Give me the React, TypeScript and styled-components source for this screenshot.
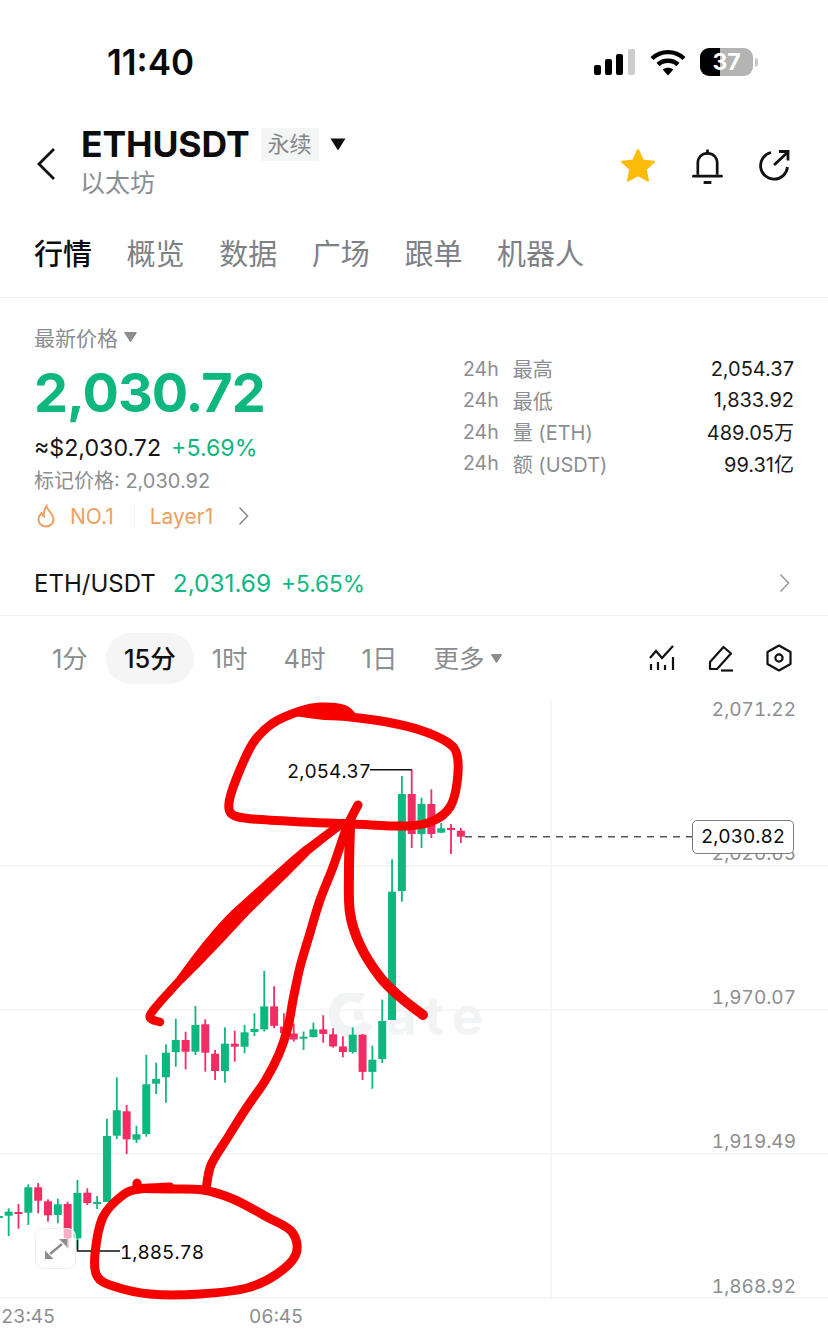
import React from "react";
import styled, { createGlobalStyle } from "styled-components";

const GREEN = "#0fb780";
const RED = "#f32c63";
const GRAY = "#8b8e91";
const ORANGE = "#ee9f5f";
const FONT = `Inter, "Noto Sans CJK SC", sans-serif`;

const Global = createGlobalStyle`
  *, *::before, *::after { box-sizing: border-box; }
  html, body { margin: 0; padding: 0; background: #fff; }
  body { font-family: ${FONT}; color: #111; }
`;

const Page = styled.div`
  width: 828px;
  height: 1333px;
  overflow: hidden;
  background: #fff;
`;

const StatusBar = styled.div`
  height: 124px;
  display: flex;
  align-items: center;
  justify-content: space-between;
  padding: 0 70px 0 107px;
`;
const Clock = styled.div`
  font-size: 35px;
  font-weight: 600;
  color: #0a0a0a;
`;
const StatusIcons = styled.div`
  display: flex;
  align-items: center;
  gap: 14px;
`;
const Battery = styled.div`
  position: relative;
  width: 53px;
  height: 28px;
  border-radius: 9px;
  overflow: hidden;
  background: linear-gradient(90deg, #000 0 38%, #b4b4b4 38% 100%);
  color: #fff;
  font-size: 23px;
  font-weight: 700;
  line-height: 28px;
  text-align: center;
`;
const BatteryNub = styled.div`
  width: 3px;
  height: 9px;
  margin-left: -12px;
  border-radius: 0 3px 3px 0;
  background: #c8c8c8;
`;

const Header = styled.div`
  height: 84px;
  display: flex;
  align-items: flex-start;
  padding: 0 38px 0 36px;
`;
const Back = styled.div`
  width: 45px;
  height: 80px;
  display: flex;
  align-items: center;
`;
const TitleCol = styled.div`
  flex: 1;
`;
const TitleRow = styled.div`
  height: 40px;
  display: flex;
  align-items: center;
`;
const Symbol = styled.div`
  font-size: 35.5px;
  font-weight: 700;
  color: #0c0c0c;
  letter-spacing: -0.1px;
`;
const Badge = styled.div`
  margin-left: 11px;
  width: 58px;
  height: 33px;
  background: #f4f6f6;
  color: #85888a;
  font-size: 22px;
  line-height: 33px;
  text-align: center;
`;
const Caret = styled.svg`
  margin-left: 11px;
`;
const Sub = styled.div`
  height: 38px;
  margin-left: -1px;
  line-height: 38px;
  font-size: 25px;
  color: ${GRAY};
`;
const HeaderIcons = styled.div`
  height: 84px;
  display: flex;
  align-items: center;
  gap: 35px;
`;

const Tabs = styled.div`
  height: 90px;
  display: flex;
  align-items: center;
  gap: 34.6px;
  padding: 0 0 2px 34px;
  border-bottom: 1px solid #f1f1f1;
`;
const Tab = styled.div<{ $active?: boolean }>`
  font-size: 29px;
  font-weight: ${(p) => (p.$active ? 500 : 400)};
  color: ${(p) => (p.$active ? "#0d0d0d" : "#7d8185")};
`;

const Quote = styled.div`
  height: 253px;
  display: flex;
  justify-content: space-between;
  padding: 24px 34px 0;
`;
const QuoteLeft = styled.div`
  display: flex;
  flex-direction: column;
`;
const PriceLabel = styled.div`
  height: 29px;
  display: flex;
  align-items: center;
  gap: 6px;
  font-size: 21px;
  color: ${GRAY};
`;
const BigPrice = styled.div`
  margin-top: 10px;
  height: 64px;
  line-height: 64px;
  font-size: 54px;
  font-weight: 700;
  color: ${GREEN};
  letter-spacing: -1px;
`;
const FiatRow = styled.div`
  margin-top: 7px;
  height: 32px;
  display: flex;
  align-items: center;
  gap: 10px;
  font-size: 23.2px;
  color: #161616;
`;
const Up = styled.span`
  color: ${GREEN};
`;
const MarkPrice = styled.div`
  margin-top: 2px;
  height: 30px;
  line-height: 30px;
  font-size: 20px;
  color: ${GRAY};
`;
const TagRow = styled.div`
  margin-top: 4px;
  height: 32px;
  display: flex;
  align-items: center;
  font-size: 21px;
  color: ${ORANGE};
`;
const FlameIcon = styled.svg`
  margin: 0 14px 0 2px;
`;
const TagSep = styled.div`
  width: 1px;
  height: 26px;
  margin: 0 15px 0 20px;
  background: #f3f3f3;
`;
const TagArrow = styled.span`
  margin-left: 25px;
  display: flex;
`;
const Stats = styled.div`
  width: 331px;
  padding-top: 31px;
`;
const StatRow = styled.div`
  height: 31.5px;
  display: flex;
  align-items: center;
  font-size: 19.5px;
  color: ${GRAY};
`;
const StatName = styled.span`
  margin-left: 14px;
  flex: 1;
  font-size: 20px;
`;
const StatValue = styled.span`
  color: #1a1a1a;
  font-size: 20px;
`;

const PairRow = styled.div`
  height: 65px;
  display: flex;
  align-items: center;
  padding: 0 38px 0 34px;
  border-bottom: 1px solid #f1f1f1;
  font-size: 24px;
`;
const PairName = styled.span`
  color: #141414;
  margin-right: 17px;
`;
const PairPrice = styled.span`
  color: ${GREEN};
  font-size: 24.4px;
  margin-right: 10px;
`;
const PairChange = styled.span`
  color: ${GREEN};
  flex: 1;
  font-size: 22.6px;
`;

const IntervalRow = styled.div`
  height: 84px;
  display: flex;
  align-items: center;
  justify-content: space-between;
  padding: 0 36px 0 34px;
`;
const Intervals = styled.div`
  display: flex;
  align-items: center;
`;
const Interval = styled.div<{ $active?: boolean }>`
  height: 51px;
  line-height: 51px;
  padding: 0 18px;
  border-radius: 25px;
  font-size: 25.5px;
  font-weight: ${(p) => (p.$active ? 500 : 400)};
  color: ${(p) => (p.$active ? "#111" : GRAY)};
  background: ${(p) => (p.$active ? "#f5f5f5" : "transparent")};
`;
const More = styled(Interval)`
  display: flex;
  align-items: center;
  gap: 7px;
`;
const ToolIcons = styled.div`
  display: flex;
  align-items: center;
  gap: 32px;
`;

const Chart = styled.div`
  position: relative;
  height: 633px;
  overflow: hidden;
`;
const Layer = styled.svg`
  position: absolute;
  left: 0;
  top: 0;
`;
const Watermark = styled.div`
  position: absolute;
  left: 328px;
  top: 290px;
  display: flex;
  align-items: center;
  gap: 6px;
  font-size: 53px;
  line-height: 52px;
  font-weight: 700;
  letter-spacing: 8px;
  color: #f2f3f5;
`;
const AxisPrice = styled.div<{ $y: number }>`
  position: absolute;
  right: 32px;
  top: ${(p) => p.$y - 700 - 13}px;
  line-height: 28px;
  font-size: 19px;
  font-variant-numeric: tabular-nums;
  color: ${GRAY};
`;
const AxisTime = styled.div<{ $x: number }>`
  position: absolute;
  left: ${(p) => p.$x}px;
  top: 603px;
  line-height: 28px;
  font-size: 19px;
  font-variant-numeric: tabular-nums;
  color: ${GRAY};
`;
const PeakLabel = styled.div<{ $x: number; $y: number }>`
  position: absolute;
  left: ${(p) => p.$x}px;
  top: ${(p) => p.$y - 700 - 13}px;
  line-height: 28px;
  font-size: 19px;
  font-variant-numeric: tabular-nums;
  color: #0b0b0b;
`;
const LastPrice = styled.div`
  position: absolute;
  left: 692px;
  top: 120px;
  width: 102px;
  height: 34px;
  border: 1px solid #7d7d7d;
  border-radius: 5px;
  background: #fff;
  font-size: 19px;
  font-variant-numeric: tabular-nums;
  line-height: 32px;
  text-align: center;
  color: #0b0b0b;
`;
const ExpandButton = styled.div`
  position: absolute;
  left: 35px;
  top: 528px;
  width: 41px;
  height: 41px;
  border: 1px solid #efefef;
  border-radius: 8px;
  background: rgba(255, 255, 255, 0.62);
  display: flex;
  align-items: center;
  justify-content: center;
`;

type Candle = [number, number, number, number, "g" | "r"];
type Pt = [number, number];

// wick top, body top, body bottom, wick bottom
const candles: Candle[] = [
  [1215, 1216, 1218, 1220, "g"],
  [1208.3, 1211.7, 1215.7, 1236, "g"],
  [1204, 1212, 1213.7, 1228.7, "r"],
  [1184.3, 1187.3, 1212.7, 1225, "g"],
  [1183, 1187.3, 1200.7, 1213.3, "r"],
  [1199.3, 1201.3, 1215.3, 1221.7, "r"],
  [1198.7, 1204.3, 1215, 1223.3, "g"],
  [1201.7, 1204, 1238.3, 1248.3, "r"],
  [1180, 1193, 1238.3, 1249.3, "g"],
  [1188.3, 1192.7, 1203, 1205, "r"],
  [1196, 1202, 1204, 1209, "g"],
  [1118.7, 1136, 1202, 1202, "g"],
  [1077.3, 1110.3, 1135.7, 1139, "g"],
  [1105, 1111.3, 1139.3, 1154, "r"],
  [1125.7, 1134.3, 1139.7, 1143, "g"],
  [1054.7, 1084.3, 1134, 1136.7, "g"],
  [1062.7, 1079, 1083.7, 1094, "g"],
  [1044.3, 1052.7, 1077.3, 1102.7, "g"],
  [1018.7, 1040, 1052, 1066.7, "g"],
  [1031.7, 1040, 1051.7, 1069.3, "r"],
  [1006, 1025, 1051.7, 1055, "g"],
  [1019.3, 1024.3, 1052.7, 1071.7, "r"],
  [1050, 1053.7, 1071, 1080, "r"],
  [1027.3, 1043.7, 1071, 1082.7, "g"],
  [1030.7, 1043.7, 1046.7, 1061.7, "r"],
  [1025, 1032.3, 1046.7, 1053.3, "g"],
  [1013.3, 1029, 1032, 1036, "g"],
  [970.8, 1006.4, 1029.4, 1031.5, "g"],
  [986.2, 1006.4, 1025.8, 1028.2, "r"],
  [1013.3, 1026.6, 1033, 1035.5, "r"],
  [1023.4, 1033.5, 1039.5, 1041.6, "r"],
  [1031.5, 1036.7, 1038.7, 1050, "g"],
  [1022.6, 1029.4, 1037, 1037.5, "g"],
  [1015.3, 1029.4, 1033.9, 1042.8, "r"],
  [1028.2, 1034.3, 1046.4, 1047.6, "r"],
  [1036.3, 1046.4, 1052, 1057.3, "r"],
  [1027.4, 1034.7, 1052, 1053.7, "g"],
  [1033.9, 1034.7, 1071.9, 1080, "r"],
  [1045.6, 1059.7, 1071.9, 1088.8, "g"],
  [999.6, 1021, 1059, 1063, "g"],
  [859.3, 891.7, 1020, 1020, "g"],
  [776, 794, 891, 901.7, "g"],
  [769.3, 794, 834, 848, "r"],
  [797.7, 804, 834, 848, "g"],
  [789.3, 804, 834, 838, "r"],
  [823, 828.3, 832.7, 833, "g"],
  [824, 828, 829.5, 854, "r"],
  [828, 830.7, 836.7, 843, "r"],
];

const axisPrices: [string, number][] = [
  ["2,071.22", 709],
  ["2,020.65", 853],
  ["1,970.07", 997],
  ["1,919.49", 1141],
  ["1,868.92", 1286],
];

const stats = [
  ["最高", "2,054.37"],
  ["最低", "1,833.92"],
  ["量 (ETH)", "489.05万"],
  ["额 (USDT)", "99.31亿"],
];

// marker strokes, in page coordinates
const topLoop: Pt[] = [
  [352, 716], [343, 709], [320, 707], [300, 711], [273, 723], [253, 743], [237, 777], [229, 803],
  [233, 815], [253, 819], [303, 822], [353, 824], [407, 826], [433, 821], [450, 807], [457, 783],
  [457, 755], [447, 742], [420, 730], [387, 722], [350, 717], [320, 715], [298, 712],
];
const bottomLoop: Pt[] = [
  [137, 1183], [140, 1188], [167, 1189], [203, 1190], [233, 1199], [267, 1217], [292, 1232],
  [296, 1254], [277, 1274], [247, 1288], [200, 1294], [150, 1294], [113, 1286], [97, 1276],
  [95, 1254], [103, 1217], [123, 1195], [140, 1189], [170, 1187],
];
const longArrow: Pt[] = [
  [358, 805], [347, 827], [333, 867], [320, 900], [310, 933], [300, 967], [293, 1000], [288, 1027],
  [279, 1054], [265, 1081], [247, 1107], [228, 1137], [211, 1165], [206, 1190],
];
const leftArrow: Pt[] = [
  [343, 823], [307, 850], [273, 883], [240, 913], [207, 950], [180, 980], [155, 1008], [150, 1018], [160, 1022],
];
const rightArrow: Pt[] = [
  [350, 827], [349, 870], [350, 913], [360, 945], [380, 977], [400, 997], [423, 1015],
];

// Catmull-Rom through the points, written out as cubic segments
const smooth = (pts: Pt[]) => {
  let d = `M${pts[0][0]} ${pts[0][1]}`;
  for (let i = 0; i < pts.length - 1; i++) {
    const a = pts[Math.max(i - 1, 0)];
    const b = pts[i];
    const c = pts[i + 1];
    const e = pts[Math.min(i + 2, pts.length - 1)];
    const c1x = b[0] + (c[0] - a[0]) / 6;
    const c1y = b[1] + (c[1] - a[1]) / 6;
    const c2x = c[0] - (e[0] - b[0]) / 6;
    const c2y = c[1] - (e[1] - b[1]) / 6;
    d += `C${c1x} ${c1y} ${c2x} ${c2y} ${c[0]} ${c[1]}`;
  }
  return d;
};

const Triangle = ({ w, h, color }: { w: number; h: number; color: string }) => (
  <svg width={w} height={h} viewBox="0 0 10 8">
    <path d="M0.5 0.5h9L5 7.5z" fill={color} stroke={color} strokeLinejoin="round" />
  </svg>
);

const Chevron = ({ color }: { color: string }) => (
  <svg width="11" height="20" viewBox="0 0 11 20" fill="none">
    <path d="M1.5 1.5L9.5 10L1.5 18.5" stroke={color} strokeWidth="1.6" />
  </svg>
);

const Candles = () => (
  <>
    {candles.map(([wt, bt, bb, wb, c], i) => {
      const x = -1.16 + i * 9.83;
      const fill = c === "g" ? GREEN : RED;
      return (
        <g key={i} fill={fill}>
          <rect x={x - 0.9} y={wt} width={1.8} height={wb - wt} />
          <rect x={x - 4} y={bt} width={8} height={Math.max(bb - bt, 2)} />
        </g>
      );
    })}
  </>
);

export default function App() {
  return (
    <Page>
      <Global />
      <StatusBar>
        <Clock>11:40</Clock>
        <StatusIcons>
          <svg width="42" height="26" viewBox="0 0 42 26">
            <rect x="0" y="16" width="7" height="10" rx="2" fill="#000" />
            <rect x="11" y="10" width="7" height="16" rx="2" fill="#000" />
            <rect x="22" y="5" width="7" height="21" rx="2" fill="#000" />
            <rect x="34" y="0" width="7" height="26" rx="2" fill="#cdcdcd" />
          </svg>
          <svg width="36" height="27" viewBox="0 0 36 27" fill="none" stroke="#000" strokeWidth="4.4">
            <path d="M2 9.5C11 1 25 1 34 9.5" />
            <path d="M8 15.5C13.5 10.5 22.5 10.5 28 15.5" />
            <path d="M18 26.5L12.6 20.5C15.5 18 20.5 18 23.4 20.5Z" fill="#000" stroke="none" />
          </svg>
          <Battery>37</Battery>
          <BatteryNub />
        </StatusIcons>
      </StatusBar>

      <Header>
        <Back>
          <svg width="20" height="34" viewBox="0 0 20 34" fill="none">
            <path d="M18 2L3 17L18 32" stroke="#111" strokeWidth="2.8" />
          </svg>
        </Back>
        <TitleCol>
          <TitleRow>
            <Symbol>ETHUSDT</Symbol>
            <Badge>永续</Badge>
            <Caret width="16" height="13" viewBox="0 0 16 13">
              <path d="M0.5 0.5h15L8 12.5z" fill="#0c0c0c" />
            </Caret>
          </TitleRow>
          <Sub>以太坊</Sub>
        </TitleCol>
        <HeaderIcons>
          <svg width="38" height="38" viewBox="0 0 38 38">
            <path
              d="M19 3l4.8 10.4 11.2 1.3-8.3 7.6 2.3 11.2L19 28l-10 5.5 2.3-11.2L3 14.7l11.2-1.3z"
              fill="#fdbb0a"
              stroke="#fdbb0a"
              strokeWidth="2"
              strokeLinejoin="round"
            />
          </svg>
          <svg width="31" height="37" viewBox="0 0 32 37" fill="none" stroke="#111" strokeWidth="2.8">
            <path d="M16 1v4" />
            <path d="M6 27V15C6 9 10 5 16 5s10 4 10 10v12" />
            <path d="M1.5 28.5h29" strokeLinecap="round" />
            <path d="M12 35h8" strokeWidth="3" />
          </svg>
          <svg width="32" height="32" viewBox="0 0 32 32" fill="none" stroke="#111" strokeWidth="2.8">
            <path d="M13 2.5A13.5 13.5 0 1 0 29.5 17" />
            <path d="M16 15L29.5 2.5" />
            <path d="M21 1.5h9v9" />
          </svg>
        </HeaderIcons>
      </Header>

      <Tabs>
        <Tab $active>行情</Tab>
        <Tab>概览</Tab>
        <Tab>数据</Tab>
        <Tab>广场</Tab>
        <Tab>跟单</Tab>
        <Tab>机器人</Tab>
      </Tabs>

      <Quote>
        <QuoteLeft>
          <PriceLabel>
            最新价格
            <Triangle w={13} h={10} color="#8b8e91" />
          </PriceLabel>
          <BigPrice>2,030.72</BigPrice>
          <FiatRow>
            ≈$2,030.72
            <Up>+5.69%</Up>
          </FiatRow>
          <MarkPrice>标记价格: 2,030.92</MarkPrice>
          <TagRow>
            <FlameIcon width="20" height="24" viewBox="0 0 20 24" fill="none">
              <path
                d="M10.5 2C11 6 17.5 9.5 17.5 15.5C17.5 19.5 14 22.5 10 22.5C6 22.5 2.5 19.5 2.5 15.5C2.5 12.5 4 10.5 5.5 9C6 11 7 12 8 12.5C7.5 8.5 8.5 5 10.5 2Z"
                stroke={ORANGE}
                strokeWidth="1.9"
              />
            </FlameIcon>
            NO.1
            <TagSep />
            Layer1
            <TagArrow>
              <Chevron color="#8b8e91" />
            </TagArrow>
          </TagRow>
        </QuoteLeft>
        <Stats>
          {stats.map(([name, value]) => (
            <StatRow key={name}>
              24h
              <StatName>{name}</StatName>
              <StatValue>{value}</StatValue>
            </StatRow>
          ))}
        </Stats>
      </Quote>

      <PairRow>
        <PairName>ETH/USDT</PairName>
        <PairPrice>2,031.69</PairPrice>
        <PairChange>+5.65%</PairChange>
        <Chevron color="#9a9da0" />
      </PairRow>

      <IntervalRow>
        <Intervals>
          <Interval>1分</Interval>
          <Interval $active>15分</Interval>
          <Interval>1时</Interval>
          <Interval>4时</Interval>
          <Interval>1日</Interval>
          <More>
            更多
            <Triangle w={11} h={9} color="#8b8e91" />
          </More>
        </Intervals>
        <ToolIcons>
          <svg width="26" height="26" viewBox="0 0 26 26" fill="none" stroke="#111" strokeWidth="2.2">
            <path d="M1 13L7 6L13 13L24 1" />
            <path d="M2 19v6M9 17v8M16 20v5M24 12v13" />
          </svg>
          <svg width="27" height="27" viewBox="0 0 27 27" fill="none" stroke="#111" strokeWidth="2.2">
            <path d="M16.5 2L24 8.5L10 24H3V17Z" strokeLinejoin="round" />
            <path d="M14 25.5H26" />
          </svg>
          <svg width="26" height="28" viewBox="0 0 26 28" fill="none" stroke="#111" strokeWidth="2.2">
            <path d="M13 1.5L24.5 8V20L13 26.5L1.5 20V8Z" strokeLinejoin="round" />
            <circle cx="13" cy="14" r="3.6" />
          </svg>
        </ToolIcons>
      </IntervalRow>

      <Chart>
        <Watermark>
          <svg width="52" height="46" viewBox="0 0 52 46" fill="none" stroke="#f2f3f5" strokeWidth="11">
            <path d="M34 6A18 18 0 1 0 40 30" />
            <rect x="26" y="18" width="9" height="9" fill="#f2f3f5" stroke="none" />
          </svg>
          ate
        </Watermark>
        <Layer width="828" height="633" viewBox="0 700 828 633">
          <g stroke="#f3f3f3" strokeWidth="1.5">
            <path d="M0 866H828M0 1010H828M0 1154H828M0 1298H828" />
            <path d="M551 700V1298" />
          </g>
          <path d="M465 836.7H692" stroke="#555" strokeWidth="1.4" strokeDasharray="7 6" />
          <Candles />
          <path d="M370 769.7H411.7" stroke="#111" strokeWidth="1.4" fill="none" />
          <path d="M77.5 1240V1251H120" stroke="#111" strokeWidth="1.4" fill="none" />
        </Layer>
        {axisPrices.map(([text, y]) => (
          <AxisPrice key={text} $y={y}>
            {text}
          </AxisPrice>
        ))}
        <AxisTime $x={1}>23:45</AxisTime>
        <AxisTime $x={249}>06:45</AxisTime>
        <PeakLabel $x={287} $y={771}>
          2,054.37
        </PeakLabel>
        <PeakLabel $x={120} $y={1252}>
          1,885.78
        </PeakLabel>
        <LastPrice>2,030.82</LastPrice>
        <ExpandButton>
          <svg width="22" height="20" viewBox="0 0 22 20" fill="#8c8c8c">
            <path d="M0 20V11.5L8.5 20Z" />
            <path d="M22 0V8L14 0Z" />
            <path d="M5 15L17 5" stroke="#8c8c8c" strokeWidth="2.4" />
          </svg>
        </ExpandButton>
        {/* red marker annotations scribbled on top of the chart */}
        <Layer width="828" height="633" viewBox="0 700 828 633">
          <g fill="none" stroke="#f60000" strokeLinecap="round" strokeLinejoin="round">
            <path d={smooth(topLoop)} strokeWidth="9" />
            <path d={smooth(bottomLoop)} strokeWidth="9" />
            <path d={smooth(longArrow)} strokeWidth="9" />
            <path d={smooth(leftArrow)} strokeWidth="8.5" />
            <path d={smooth(rightArrow)} strokeWidth="10" />
          </g>
          {/* belly of the left stroke where the pen went over it twice */}
          <path
            d="M343 821L303.5 846.5C285 862 260 885 234.7 907.7C220 921 200 945 177 977L183 983C195 972 220 946 245.3 918.3C258 905 285 880 310.5 853.5L345 826Z"
            fill="#f60000"
          />
        </Layer>
      </Chart>
    </Page>
  );
}
